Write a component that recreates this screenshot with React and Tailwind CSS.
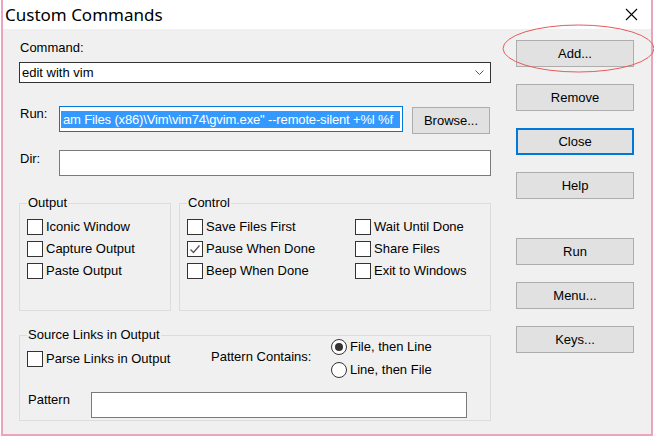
import React from "react";

const CheckBox = ({ checked }) => (
  <span className="w-[16px] h-[16px] border border-[#333] bg-white shrink-0 flex items-center justify-center">
    {checked && (
      <svg width="14" height="14" viewBox="0 0 14 14">
        <path d="M2.5 7.5 L5.5 10.5 L11.5 3.5" fill="none" stroke="#555" strokeWidth="1.3" />
      </svg>
    )}
  </span>
);

const Check = ({ label, checked }) => (
  <div className="flex items-center h-[16px] gap-[3px]">
    <CheckBox checked={checked} />
    <span className="leading-[16px] whitespace-nowrap">{label}</span>
  </div>
);

const Radio = ({ label, checked }) => (
  <div className="flex items-center h-[16px] gap-[3px]">
    <span className="w-[16px] h-[16px] rounded-full border border-[#333] bg-white flex items-center justify-center shrink-0">
      {checked && <span className="w-[8px] h-[8px] rounded-full bg-[#333]" />}
    </span>
    <span className="leading-[16px] whitespace-nowrap">{label}</span>
  </div>
);

const Group = ({ title, className, children }) => (
  <div className={`relative border border-[#dcdcdc] ${className}`}>
    <span className="absolute left-[7px] top-[-9px] px-[1px] bg-[#f0f0f0] leading-[16px] whitespace-nowrap">{title}</span>
    {children}
  </div>
);

const Btn = ({ label, focus, className = "" }) => (
  <button
    className={`w-[118px] h-[27px] bg-[#e1e1e1] text-black flex items-center justify-center pt-[1px] ${
      focus ? "border-2 border-[#0078d7]" : "border border-[#adadad]"
    } ${className}`}
  >
    {label}
  </button>
);

export default function App() {
  return (
    <div className="w-[654px] h-[437px] bg-white relative overflow-hidden text-[13px] text-black" style={{ fontFamily: '"Liberation Sans", Arial, sans-serif' }}>
      <div className="ml-[1px] w-[652px] h-[436px] border-x-2 border-b-2 border-[#eaa4be] flex flex-col">
        {/* title bar */}
        <div className="h-[29px] bg-white flex items-center justify-between pl-[2px] pr-[13px] shrink-0">
          <span className="text-[17px] leading-[20px] pt-[1px]" style={{ fontFamily: '"Noto Sans", sans-serif' }}>Custom Commands</span>
          <svg width="13" height="13" viewBox="0 0 13 13">
            <path d="M1 1 L12 12 M12 1 L1 12" stroke="#000" strokeWidth="1.1" />
          </svg>
        </div>

        {/* body */}
        <div className="flex-1 bg-[#f0f0f0] flex pl-[16px] pt-[11px]">
          <div className="w-[472px] flex flex-col">
            <div className="h-[16px] leading-[16px] pl-[1px]">Command:</div>
            <div className="mt-[6px] h-[21px] bg-white border border-[#333] flex items-center justify-between pl-[2px] pr-[6px]">
              <span>edit with vim</span>
              <svg width="9" height="6" viewBox="0 0 9 6">
                <path d="M0.5 0.5 L4.5 4.5 L8.5 0.5" fill="none" stroke="#555" strokeWidth="1" />
              </svg>
            </div>

            <div className="mt-[23px] flex items-start">
              <div className="w-[40px] pl-[1px] leading-[16px]">Run:</div>
              <div className="w-[344px] h-[26px] bg-white border border-[#0078d7] flex items-center pl-[1px] pr-[2px]">
                <div className="flex-1 h-[17px] bg-[#3399ff] text-white leading-[17px] whitespace-nowrap overflow-hidden pl-[2px] tracking-[-0.15px]">
                  am Files (x86)\Vim\vim74\gvim.exe" --remote-silent +%l %f
                </div>
              </div>
              <button className="ml-[9px] mt-[1px] w-[78px] h-[27px] bg-[#e1e1e1] border border-[#adadad] flex items-center justify-center pt-[1px]">Browse...</button>
            </div>

            <div className="mt-[16px] flex items-start">
              <div className="w-[40px] pl-[1px] leading-[16px] mt-[1px]">Dir:</div>
              <div className="w-[432px] h-[26px] bg-white border border-[#7a7a7a]" />
            </div>

            <div className="mt-[27px] flex gap-[8px]">
              <Group title="Output" className="w-[152px] h-[108px]">
                <div className="pt-[15px] pl-[7px] flex flex-col gap-[6px]">
                  <Check label="Iconic Window" />
                  <Check label="Capture Output" />
                  <Check label="Paste Output" />
                </div>
              </Group>
              <Group title="Control" className="w-[312px] h-[108px]">
                <div className="pt-[15px] pl-[7px] grid grid-cols-[168px_1fr] gap-y-[6px]">
                  <Check label="Save Files First" />
                  <Check label="Wait Until Done" />
                  <Check label="Pause When Done" checked />
                  <Check label="Share Files" />
                  <Check label="Beep When Done" />
                  <Check label="Exit to Windows" />
                </div>
              </Group>
            </div>

            <Group title="Source Links in Output" className="mt-[24px] w-[472px] h-[86px]">
              <div className="pt-[3px] pl-[7px] flex items-start">
                <div className="w-[184px] mt-[12px]">
                  <Check label="Parse Links in Output" />
                </div>
                <div className="w-[120px] mt-[10px] leading-[16px]">Pattern Contains:</div>
                <div className="flex flex-col gap-[7px]">
                  <Radio label="File, then Line" checked />
                  <Radio label="Line, then File" />
                </div>
              </div>
              <div className="mt-[14px] pl-[7px] flex items-start">
                <div className="w-[64px] pl-[1px] leading-[16px]">Pattern</div>
                <div className="w-[376px] h-[26px] bg-white border border-[#7a7a7a]" />
              </div>
            </Group>
          </div>

          <div className="ml-[25px] flex flex-col gap-[17px]">
            <Btn label="Add..." />
            <Btn label="Remove" />
            <Btn label="Close" focus />
            <Btn label="Help" />
            <Btn label="Run" className="mt-[22px]" />
            <Btn label="Menu..." />
            <Btn label="Keys..." />
          </div>
        </div>
      </div>

      {/* red annotation ellipse */}
      <svg className="absolute left-[500px] top-[22px] pointer-events-none" width="160" height="54" viewBox="0 0 160 54">
        <ellipse cx="78.5" cy="26.5" rx="75.5" ry="23.5" fill="none" stroke="#e85a5a" strokeWidth="1" />
      </svg>
    </div>
  );
}
